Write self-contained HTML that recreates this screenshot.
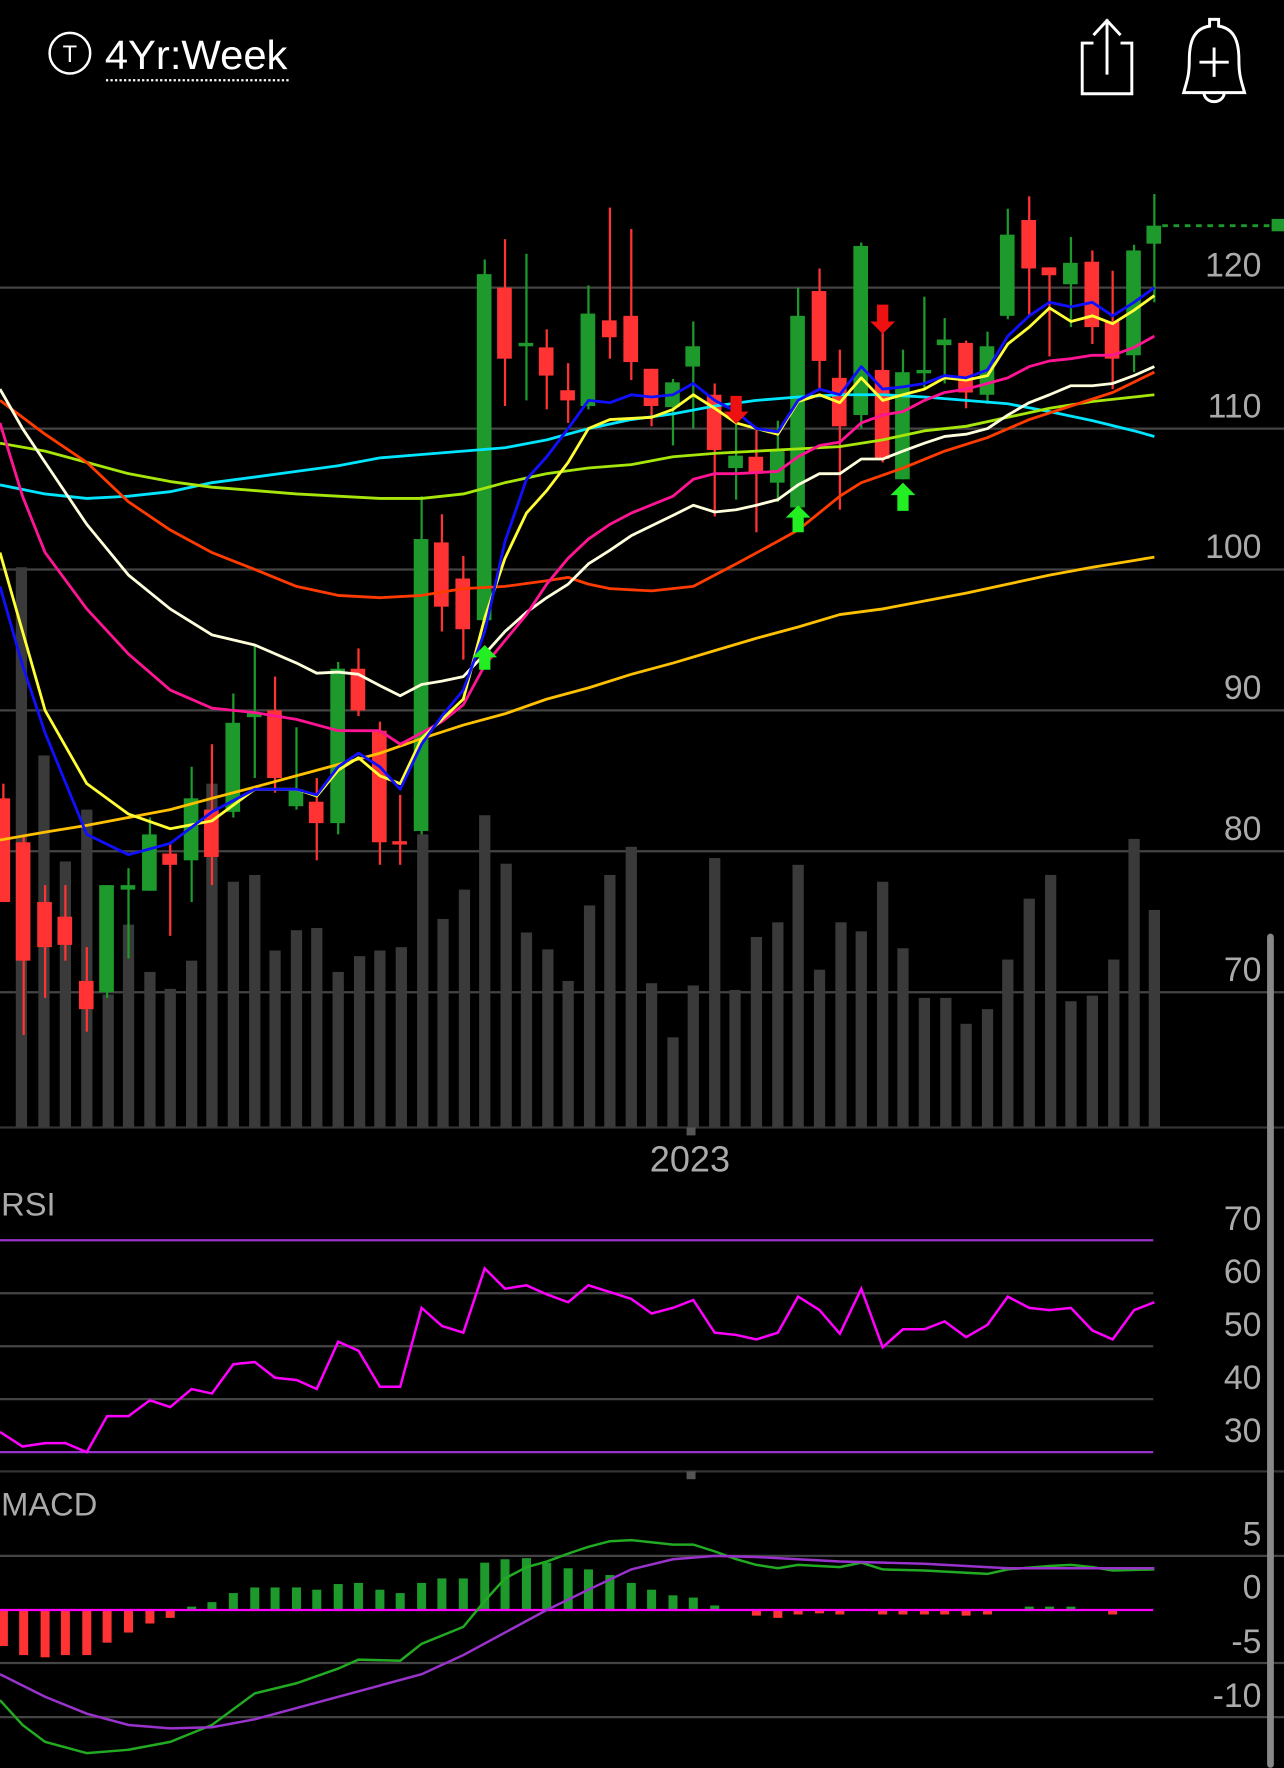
<!DOCTYPE html>
<html><head><meta charset="utf-8"><style>
html,body{margin:0;padding:0;background:#000;}
svg{display:block;}
text{font-family:"Liberation Sans",sans-serif;}
</style></head><body>
<svg width="1284" height="1768" viewBox="0 0 1139 1568" xmlns="http://www.w3.org/2000/svg">
<rect width="1139" height="1568" fill="#000"/>
<!-- header -->
<circle cx="62" cy="47" r="18" fill="none" stroke="#fff" stroke-width="2.2"/>
<text x="62" y="55" font-size="21" fill="#fff" text-anchor="middle">T</text>
<text x="93" y="61" font-size="36" fill="#fff" textLength="162" lengthAdjust="spacingAndGlyphs">4Yr:Week</text>
<line x1="94" y1="71" x2="256" y2="71" stroke="#fff" stroke-width="2" stroke-dasharray="2 2"/>
<g fill="none" stroke="#fff" stroke-width="2.6">
<path d="M970 38 H960 V83 H1004 V38 H994"/>
<path d="M982 66 V17 M970 31 L982 18 L994 31"/>
<path d="M1073 17 h8 v6 c14 2 18 14 18 30 c0 14 2 18 5 29 h-54 c3 -11 5 -15 5 -29 c0 -16 4 -28 18 -30 z"/>
<path d="M1068 82 a9 8 0 0 0 18 0"/>
<path d="M1064 55 h26 M1077 42 v26"/>
</g>
<!-- grid -->
<g stroke="#444" stroke-width="2">
<line x1="0" y1="255" x2="1139" y2="255"/><line x1="0" y1="380" x2="1139" y2="380"/>
<line x1="0" y1="505" x2="1139" y2="505"/><line x1="0" y1="630" x2="1139" y2="630"/>
<line x1="0" y1="755" x2="1139" y2="755"/><line x1="0" y1="880" x2="1139" y2="880"/>
<line x1="0" y1="1000" x2="1139" y2="1000" stroke="#333"/>
<line x1="0" y1="1147" x2="1023" y2="1147"/><line x1="0" y1="1194" x2="1023" y2="1194"/><line x1="0" y1="1241" x2="1023" y2="1241"/>
<line x1="0" y1="1305" x2="1139" y2="1305" stroke="#333"/>
<line x1="0" y1="1380" x2="1139" y2="1380"/><line x1="0" y1="1475" x2="1139" y2="1475"/><line x1="0" y1="1523" x2="1139" y2="1523"/>
</g>
<line x1="0" y1="1100" x2="1023" y2="1100" stroke="#9933cc" stroke-width="2"/>
<line x1="0" y1="1288" x2="1023" y2="1288" stroke="#9933cc" stroke-width="2"/>
<rect x="609" y="1000" width="8" height="7" fill="#555"/><rect x="609" y="1305" width="8" height="7" fill="#555"/>
<g fill="#aaa" font-size="30" text-anchor="end">
<text x="1119" y="245">120</text><text x="1119" y="370">110</text><text x="1119" y="495">100</text>
<text x="1119" y="620">90</text><text x="1119" y="745">80</text><text x="1119" y="870">70</text>
<text x="1119" y="1091">70</text><text x="1119" y="1138">60</text><text x="1119" y="1185">50</text><text x="1119" y="1232">40</text><text x="1119" y="1279">30</text>
<text x="1119" y="1371">5</text><text x="1119" y="1418">0</text><text x="1119" y="1466">-5</text><text x="1119" y="1514">-10</text>
</g>
<text x="612" y="1039" font-size="32" fill="#aaa" text-anchor="middle">2023</text>
<text x="1" y="1078" font-size="29" fill="#aaa">RSI</text>
<text x="1" y="1344" font-size="29" fill="#aaa">MACD</text>
<rect x="1124" y="828" width="6" height="740" rx="3" fill="#888"/>
<!-- volume -->
<g fill="#3a3a3a">
<rect x="14" y="503" width="10" height="497"/><rect x="34" y="670" width="10" height="330"/><rect x="53" y="764" width="10" height="236"/><rect x="72" y="718" width="10" height="282"/><rect x="91" y="882" width="10" height="118"/><rect x="109" y="820" width="10" height="180"/><rect x="128" y="862" width="10" height="138"/><rect x="146" y="877" width="10" height="123"/><rect x="165" y="852" width="10" height="148"/><rect x="183" y="695" width="10" height="305"/><rect x="202" y="782" width="10" height="218"/><rect x="221" y="776" width="10" height="224"/><rect x="239" y="843" width="10" height="157"/><rect x="258" y="825" width="10" height="175"/><rect x="276" y="823" width="10" height="177"/><rect x="295" y="862" width="10" height="138"/><rect x="314" y="848" width="10" height="152"/><rect x="332" y="843" width="10" height="157"/><rect x="351" y="840" width="10" height="160"/><rect x="370" y="740" width="10" height="260"/><rect x="388" y="815" width="10" height="185"/><rect x="407" y="789" width="10" height="211"/><rect x="425" y="723" width="10" height="277"/><rect x="444" y="766" width="10" height="234"/><rect x="462" y="827" width="10" height="173"/><rect x="481" y="842" width="10" height="158"/><rect x="499" y="870" width="10" height="130"/><rect x="518" y="803" width="10" height="197"/><rect x="536" y="776" width="10" height="224"/><rect x="555" y="751" width="10" height="249"/><rect x="573" y="872" width="10" height="128"/><rect x="592" y="920" width="10" height="80"/><rect x="610" y="874" width="10" height="126"/><rect x="629" y="761" width="10" height="239"/><rect x="647" y="878" width="10" height="122"/><rect x="666" y="831" width="10" height="169"/><rect x="685" y="818" width="10" height="182"/><rect x="703" y="767" width="10" height="233"/><rect x="722" y="860" width="10" height="140"/><rect x="741" y="818" width="10" height="182"/><rect x="759" y="826" width="10" height="174"/><rect x="778" y="782" width="10" height="218"/><rect x="796" y="841" width="10" height="159"/><rect x="815" y="885" width="10" height="115"/><rect x="834" y="885" width="10" height="115"/><rect x="852" y="908" width="10" height="92"/><rect x="871" y="895" width="10" height="105"/><rect x="889" y="851" width="10" height="149"/><rect x="908" y="797" width="10" height="203"/><rect x="927" y="776" width="10" height="224"/><rect x="945" y="888" width="10" height="112"/><rect x="964" y="883" width="10" height="117"/><rect x="983" y="851" width="10" height="149"/><rect x="1001" y="744" width="10" height="256"/><rect x="1019" y="807" width="10" height="193"/>
</g>
<!-- candles red -->
<g fill="#ff3333">
<rect x="2" y="695" width="2" height="105"/><rect x="-4" y="708" width="13" height="92"/>
<rect x="20" y="740" width="2" height="178"/><rect x="14" y="747" width="13" height="105"/>
<rect x="39" y="785" width="2" height="100"/><rect x="33" y="800" width="13" height="40"/>
<rect x="57" y="785" width="2" height="67"/><rect x="51" y="813" width="13" height="25"/>
<rect x="76" y="840" width="2" height="75"/><rect x="70" y="870" width="13" height="25"/>
<rect x="150" y="747" width="2" height="83"/><rect x="144" y="757" width="13" height="10"/>
<rect x="187" y="660" width="2" height="125"/><rect x="181" y="718" width="13" height="42"/>
<rect x="243" y="600" width="2" height="103"/><rect x="237" y="630" width="13" height="60"/>
<rect x="280" y="690" width="2" height="73"/><rect x="274" y="711" width="13" height="19"/>
<rect x="317" y="575" width="2" height="60"/><rect x="311" y="593" width="13" height="37"/>
<rect x="336" y="640" width="2" height="127"/><rect x="330" y="648" width="13" height="99"/>
<rect x="354" y="705" width="2" height="62"/><rect x="348" y="746" width="13" height="3"/>
<rect x="391" y="456" width="2" height="104"/><rect x="385" y="481" width="13" height="57"/>
<rect x="410" y="493" width="2" height="92"/><rect x="404" y="513" width="13" height="45"/>
<rect x="447" y="212" width="2" height="148"/><rect x="441" y="255" width="13" height="63"/>
<rect x="484" y="292" width="2" height="71"/><rect x="478" y="308" width="13" height="25"/>
<rect x="503" y="322" width="2" height="53"/><rect x="497" y="346" width="13" height="9"/>
<rect x="540" y="184" width="2" height="134"/><rect x="534" y="284" width="13" height="15"/>
<rect x="559" y="203" width="2" height="134"/><rect x="553" y="280" width="13" height="41"/>
<rect x="577" y="327" width="2" height="51"/><rect x="571" y="327" width="13" height="33"/>
<rect x="633" y="340" width="2" height="118"/><rect x="627" y="350" width="13" height="49"/>
<rect x="670" y="380" width="2" height="92"/><rect x="664" y="405" width="13" height="15"/>
<rect x="726" y="238" width="2" height="107"/><rect x="720" y="258" width="13" height="62"/>
<rect x="744" y="310" width="2" height="142"/><rect x="738" y="335" width="13" height="43"/>
<rect x="782" y="290" width="2" height="120"/><rect x="776" y="328" width="13" height="79"/>
<rect x="856" y="302" width="2" height="60"/><rect x="850" y="304" width="13" height="44"/>
<rect x="912" y="174" width="2" height="106"/><rect x="906" y="195" width="13" height="43"/>
<rect x="930" y="237" width="2" height="79"/><rect x="924" y="237" width="13" height="7"/>
<rect x="968" y="222" width="2" height="83"/><rect x="962" y="232" width="13" height="58"/>
<rect x="986" y="240" width="2" height="105"/><rect x="980" y="285" width="13" height="33"/>
</g>
<!-- candles green -->
<g fill="#1d9a2b">
<rect x="94" y="785" width="2" height="100"/><rect x="88" y="785" width="13" height="95"/>
<rect x="113" y="770" width="2" height="80"/><rect x="107" y="785" width="13" height="4"/>
<rect x="132" y="725" width="2" height="65"/><rect x="126" y="740" width="13" height="50"/>
<rect x="169" y="680" width="2" height="120"/><rect x="163" y="708" width="13" height="55"/>
<rect x="206" y="615" width="2" height="110"/><rect x="200" y="641" width="13" height="79"/>
<rect x="225" y="572" width="2" height="118"/><rect x="219" y="632" width="13" height="4"/>
<rect x="262" y="645" width="2" height="73"/><rect x="256" y="700" width="13" height="15"/>
<rect x="299" y="587" width="2" height="153"/><rect x="293" y="593" width="13" height="137"/>
<rect x="373" y="440" width="2" height="300"/><rect x="367" y="478" width="13" height="259"/>
<rect x="429" y="230" width="2" height="322"/><rect x="423" y="243" width="13" height="307"/>
<rect x="466" y="225" width="2" height="130"/><rect x="460" y="304" width="13" height="3"/>
<rect x="521" y="253" width="2" height="110"/><rect x="515" y="278" width="13" height="82"/>
<rect x="596" y="336" width="2" height="59"/><rect x="590" y="339" width="13" height="22"/>
<rect x="614" y="285" width="2" height="95"/><rect x="608" y="307" width="13" height="18"/>
<rect x="652" y="373" width="2" height="70"/><rect x="646" y="404" width="13" height="11"/>
<rect x="689" y="373" width="2" height="72"/><rect x="683" y="400" width="13" height="28"/>
<rect x="707" y="255" width="2" height="195"/><rect x="701" y="280" width="13" height="170"/>
<rect x="763" y="215" width="2" height="165"/><rect x="757" y="218" width="13" height="150"/>
<rect x="800" y="310" width="2" height="115"/><rect x="794" y="330" width="13" height="95"/>
<rect x="819" y="263" width="2" height="82"/><rect x="813" y="328" width="13" height="3"/>
<rect x="837" y="282" width="2" height="58"/><rect x="831" y="301" width="13" height="5"/>
<rect x="875" y="294" width="2" height="64"/><rect x="869" y="307" width="13" height="43"/>
<rect x="893" y="185" width="2" height="98"/><rect x="887" y="208" width="13" height="72"/>
<rect x="949" y="210" width="2" height="80"/><rect x="943" y="233" width="13" height="19"/>
<rect x="1005" y="217" width="2" height="113"/><rect x="999" y="222" width="13" height="93"/>
<rect x="1023" y="172" width="2" height="96"/><rect x="1017" y="200" width="13" height="16"/>
</g>
<line x1="1031" y1="200" x2="1128" y2="200" stroke="#1d9a2b" stroke-width="2.5" stroke-dasharray="5 5"/>
<rect x="1128" y="194" width="11" height="11" fill="#1d9a2b"/>
<!-- MAs -->
<g fill="none" stroke-width="2.5" stroke-linejoin="round">
<polyline stroke="#ffc000" points="0,745 40,738 77,732 114,725 151,718 188,708 226,698 263,688 300,678 337,668 374,655 411,643 448,633 485,620 522,610 560,598 597,588 634,577 671,566 708,556 745,545 783,540 820,533 857,526 894,518 931,510 969,503 1006,497 1024,494"/>
<polyline stroke="#00e5ff" points="0,430 40,438 77,442 114,440 151,436 188,428 226,423 263,418 300,413 337,406 374,403 411,400 448,397 485,390 522,380 560,372 597,367 634,360 671,355 708,352 745,350 783,350 820,352 857,355 894,358 931,365 969,373 1006,382 1024,387"/>
<polyline stroke="#a6e60a" points="0,393 40,400 77,410 114,420 151,427 188,432 226,435 263,438 300,440 337,442 374,442 411,438 448,428 485,420 522,415 560,412 597,405 634,402 671,400 708,398 745,396 783,390 820,382 857,378 894,370 931,362 969,356 1006,352 1024,350"/>
<polyline stroke="#ff3b00" points="0,355 40,385 77,410 114,445 151,470 188,490 226,505 263,520 300,528 337,530 374,528 411,522 448,520 485,515 504,512 522,518 541,522 578,524 615,520 653,500 690,480 708,470 745,440 764,428 801,415 838,400 876,388 913,372 950,360 987,348 1024,330"/>
<polyline stroke="#ffffdd" points="0,345 20,380 40,410 77,465 114,510 151,540 188,563 226,572 263,588 281,597 300,596 318,598 337,608 355,617 374,607 392,604 411,600 430,580 448,560 467,543 485,530 504,518 522,500 541,488 560,475 597,457 615,448 634,454 653,452 671,448 690,443 708,430 727,420 745,420 764,407 783,407 801,400 820,393 838,387 857,385 876,380 894,368 913,357 931,350 950,342 969,342 987,340 1006,333 1024,325"/>
<polyline stroke="#ff1493" points="0,375 20,440 40,490 77,540 114,580 151,612 188,628 226,632 263,638 300,648 337,648 355,660 374,650 392,640 411,625 430,590 448,568 467,545 485,518 504,495 522,478 541,465 560,455 597,440 615,425 634,420 653,420 690,418 708,405 727,395 745,392 764,375 783,368 801,365 820,355 838,348 857,345 876,340 894,335 913,325 931,320 950,318 969,315 987,315 1006,308 1024,298"/>
<polyline stroke="#ffff33" points="0,490 20,560 40,630 77,695 114,722 151,735 188,728 226,700 263,700 281,706 300,683 318,672 337,688 355,695 374,655 392,638 411,620 430,548 448,495 467,455 485,435 504,410 522,380 541,372 560,371 578,370 597,363 615,350 634,362 653,375 671,380 690,385 708,356 727,350 745,357 764,335 783,355 801,350 820,345 838,335 857,337 876,333 894,305 913,290 931,273 950,285 969,280 987,287 1006,275 1024,262"/>
<polyline stroke="#1010ff" points="0,520 20,590 40,650 77,740 114,758 151,748 188,720 226,700 263,700 281,705 300,680 318,668 337,680 355,700 374,660 392,635 411,612 430,560 448,480 467,425 485,405 504,380 522,355 541,357 560,350 578,352 597,350 615,340 634,355 653,365 671,380 690,383 708,355 727,345 745,350 764,325 783,345 801,343 820,340 838,333 857,335 876,328 894,298 913,280 931,268 950,272 969,268 987,280 1006,268 1024,255"/>
</g>
<!-- arrows -->
<g fill="#22ee22">
<path d="M430 572 l11 11 h-6 v11 h-10 v-11 h-6 z"/>
<path d="M708 448 l11 11 h-6 v13 h-10 v-13 h-6 z"/>
<path d="M801 428 l11 11 h-6 v14 h-10 v-14 h-6 z"/>
</g>
<g fill="#ee1111">
<path d="M653 376 l11 -11 h-6 v-14 h-10 v14 h-6 z"/>
<path d="M783 296 l11 -11 h-6 v-15 h-10 v15 h-6 z"/>
</g>
<!-- RSI -->
<polyline fill="none" stroke="#ff00ff" stroke-width="2.2" points="0,1270 20,1283 40,1280 58,1280 77,1288 95,1256 114,1256 133,1242 151,1248 170,1232 188,1236 207,1210 226,1208 244,1222 263,1224 281,1232 300,1190 318,1198 337,1230 355,1230 374,1160 392,1176 411,1182 430,1125 448,1143 467,1140 485,1148 504,1155 522,1140 541,1146 560,1152 578,1165 597,1160 615,1153 634,1182 653,1184 671,1188 690,1182 708,1150 727,1162 745,1183 764,1143 783,1195 801,1179 820,1179 838,1172 857,1186 876,1175 894,1150 913,1160 931,1162 950,1160 969,1180 987,1188 1006,1162 1024,1155"/>
<!-- MACD hist -->
<g fill="#ff3333">
<rect x="-1" y="1428" width="8" height="32"/><rect x="17" y="1428" width="8" height="40"/><rect x="36" y="1428" width="8" height="42"/><rect x="54" y="1428" width="8" height="40"/><rect x="73" y="1428" width="8" height="40"/><rect x="91" y="1428" width="8" height="29"/><rect x="110" y="1428" width="8" height="20"/><rect x="129" y="1428" width="8" height="12"/><rect x="147" y="1428" width="8" height="7"/>
<rect x="667" y="1428" width="8" height="5"/><rect x="686" y="1428" width="8" height="7"/><rect x="704" y="1428" width="8" height="4"/><rect x="723" y="1428" width="8" height="3"/><rect x="741" y="1428" width="8" height="4"/><rect x="779" y="1428" width="8" height="4"/><rect x="797" y="1428" width="8" height="4"/><rect x="816" y="1428" width="8" height="4"/><rect x="834" y="1428" width="8" height="4"/><rect x="853" y="1428" width="8" height="5"/><rect x="872" y="1428" width="8" height="4"/><rect x="983" y="1428" width="8" height="4"/>
</g>
<g fill="#1d9a2b">
<rect x="166" y="1425" width="8" height="3"/><rect x="184" y="1421" width="8" height="7"/><rect x="203" y="1413" width="8" height="15"/><rect x="222" y="1408" width="8" height="20"/><rect x="240" y="1408" width="8" height="20"/><rect x="259" y="1408" width="8" height="20"/><rect x="277" y="1410" width="8" height="18"/><rect x="296" y="1405" width="8" height="23"/><rect x="314" y="1404" width="8" height="24"/><rect x="333" y="1410" width="8" height="18"/><rect x="351" y="1413" width="8" height="15"/><rect x="370" y="1404" width="8" height="24"/><rect x="388" y="1400" width="8" height="28"/><rect x="407" y="1400" width="8" height="28"/><rect x="426" y="1386" width="8" height="42"/><rect x="444" y="1383" width="8" height="45"/><rect x="463" y="1382" width="8" height="46"/><rect x="481" y="1386" width="8" height="42"/><rect x="500" y="1391" width="8" height="37"/><rect x="518" y="1392" width="8" height="36"/><rect x="537" y="1397" width="8" height="31"/><rect x="556" y="1404" width="8" height="24"/><rect x="574" y="1410" width="8" height="18"/><rect x="593" y="1415" width="8" height="13"/><rect x="611" y="1417" width="8" height="11"/><rect x="630" y="1424" width="8" height="4"/><rect x="909" y="1425" width="8" height="3"/><rect x="927" y="1425" width="8" height="3"/><rect x="946" y="1425" width="8" height="3"/>
</g>
<line x1="0" y1="1428" x2="1023" y2="1428" stroke="#ff00ff" stroke-width="2"/>
<polyline fill="none" stroke="#22aa22" stroke-width="2.2" points="0,1508 20,1530 40,1545 77,1555 114,1552 151,1545 188,1530 226,1502 263,1493 300,1480 318,1472 355,1473 374,1458 411,1443 430,1420 448,1400 467,1390 485,1385 504,1378 522,1372 541,1367 560,1366 597,1370 615,1370 634,1376 653,1383 671,1388 690,1391 708,1388 745,1390 764,1386 783,1392 820,1393 857,1395 876,1396 894,1392 931,1389 950,1388 969,1390 987,1393 1024,1392"/>
<polyline fill="none" stroke="#9933cc" stroke-width="2.2" points="0,1485 40,1505 77,1520 114,1530 151,1533 188,1532 226,1525 263,1515 300,1505 337,1495 374,1485 411,1468 448,1448 485,1428 522,1410 560,1392 597,1383 634,1380 671,1381 708,1383 745,1385 783,1386 820,1387 857,1389 894,1391 931,1391 969,1391 1024,1391"/>
</svg>
</body></html>
